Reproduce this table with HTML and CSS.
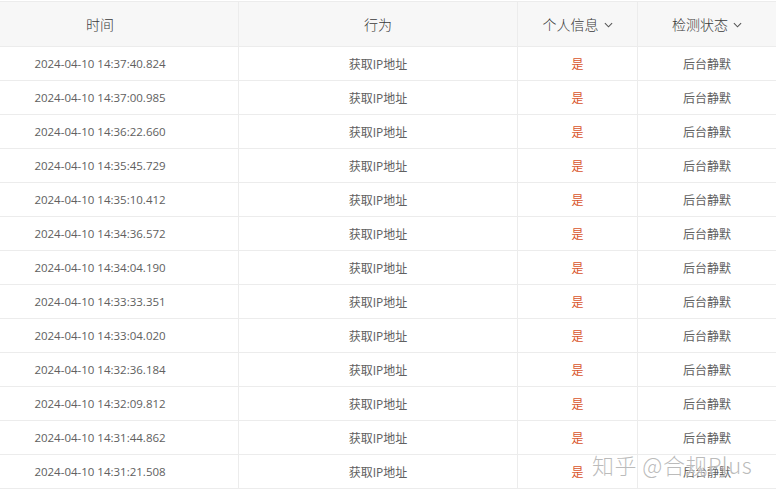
FILE: index.html
```html
<!DOCTYPE html>
<html lang="zh">
<head>
<meta charset="utf-8">
<link rel="stylesheet" href="styles.css">
</head>
<body>
<div class="page">
  <div class="table">
    <div class="row head">
      <div class="cell c1">时间</div>
      <div class="cell">行为</div>
      <div class="cell">个人信息<svg class="chev" viewBox="0 0 10 6"><path d="M1 1l4 4 4-4" fill="none" stroke="#555" stroke-width="1.2"/></svg></div>
      <div class="cell">检测状态<svg class="chev" viewBox="0 0 10 6"><path d="M1 1l4 4 4-4" fill="none" stroke="#555" stroke-width="1.2"/></svg></div>
    </div>
    <div class="row"><div class="cell c1">2024-04-10 14:37:40.824</div><div class="cell">获取IP地址</div><div class="cell yes">是</div><div class="cell">后台静默</div></div>
    <div class="row"><div class="cell c1">2024-04-10 14:37:00.985</div><div class="cell">获取IP地址</div><div class="cell yes">是</div><div class="cell">后台静默</div></div>
    <div class="row"><div class="cell c1">2024-04-10 14:36:22.660</div><div class="cell">获取IP地址</div><div class="cell yes">是</div><div class="cell">后台静默</div></div>
    <div class="row"><div class="cell c1">2024-04-10 14:35:45.729</div><div class="cell">获取IP地址</div><div class="cell yes">是</div><div class="cell">后台静默</div></div>
    <div class="row"><div class="cell c1">2024-04-10 14:35:10.412</div><div class="cell">获取IP地址</div><div class="cell yes">是</div><div class="cell">后台静默</div></div>
    <div class="row"><div class="cell c1">2024-04-10 14:34:36.572</div><div class="cell">获取IP地址</div><div class="cell yes">是</div><div class="cell">后台静默</div></div>
    <div class="row"><div class="cell c1">2024-04-10 14:34:04.190</div><div class="cell">获取IP地址</div><div class="cell yes">是</div><div class="cell">后台静默</div></div>
    <div class="row"><div class="cell c1">2024-04-10 14:33:33.351</div><div class="cell">获取IP地址</div><div class="cell yes">是</div><div class="cell">后台静默</div></div>
    <div class="row"><div class="cell c1">2024-04-10 14:33:04.020</div><div class="cell">获取IP地址</div><div class="cell yes">是</div><div class="cell">后台静默</div></div>
    <div class="row"><div class="cell c1">2024-04-10 14:32:36.184</div><div class="cell">获取IP地址</div><div class="cell yes">是</div><div class="cell">后台静默</div></div>
    <div class="row"><div class="cell c1">2024-04-10 14:32:09.812</div><div class="cell">获取IP地址</div><div class="cell yes">是</div><div class="cell">后台静默</div></div>
    <div class="row"><div class="cell c1">2024-04-10 14:31:44.862</div><div class="cell">获取IP地址</div><div class="cell yes">是</div><div class="cell">后台静默</div></div>
    <div class="row"><div class="cell c1">2024-04-10 14:31:21.508</div><div class="cell">获取IP地址</div><div class="cell yes">是</div><div class="cell">后台静默</div></div>
  </div>
  <div class="watermark">知乎 @合规Plus</div>
</div>
</body>
</html>
```
FILE: styles.css
```css
html, body {
  margin: 0;
  padding: 0;
  background: #fff;
}
.page {
  position: relative;
  width: 776px;
  height: 495px;
  overflow: hidden;
  padding-top: 1px;
  box-sizing: border-box;
  font-family: "Open Sans", "Noto Sans CJK SC", sans-serif;
}
.table {
  border-top: 1px solid #ececec;
}
.row {
  display: grid;
  grid-template-columns: 239px 279px 120px 1fr;
  height: 34px;
  border-bottom: 1px solid #ececec;
  box-sizing: border-box;
}
.row.head {
  height: 45px;
  background: #f7f7f7;
}
.cell {
  display: flex;
  align-items: center;
  justify-content: center;
  border-right: 1px solid #ececec;
  font-size: 12px;
  color: #606060;
  white-space: nowrap;
}
.cell:last-child {
  border-right: none;
}
.c1 {
  padding-right: 38px;
  font-size: 11.5px;
}
.head .cell {
  font-size: 14px;
  color: #3a3a3a;
  font-family: "Noto Sans CJK SC", sans-serif;
  font-weight: 300;
}
.head .c1 {
  font-size: 14px;
}
.yes {
  color: #d9552c;
}
.chev {
  width: 9px;
  height: 6px;
  margin-left: 5px;
  margin-top: 1px;
}
.watermark {
  position: absolute;
  left: 592px;
  top: 448px;
  font-family: "Noto Sans CJK SC", sans-serif;
  font-size: 22px;
  font-weight: 300;
  color: rgba(120, 120, 120, 0.5);
  text-shadow: 0 0 2px #fff, 0 0 2px #fff;
  white-space: nowrap;
  letter-spacing: 0.5px;
}
```
